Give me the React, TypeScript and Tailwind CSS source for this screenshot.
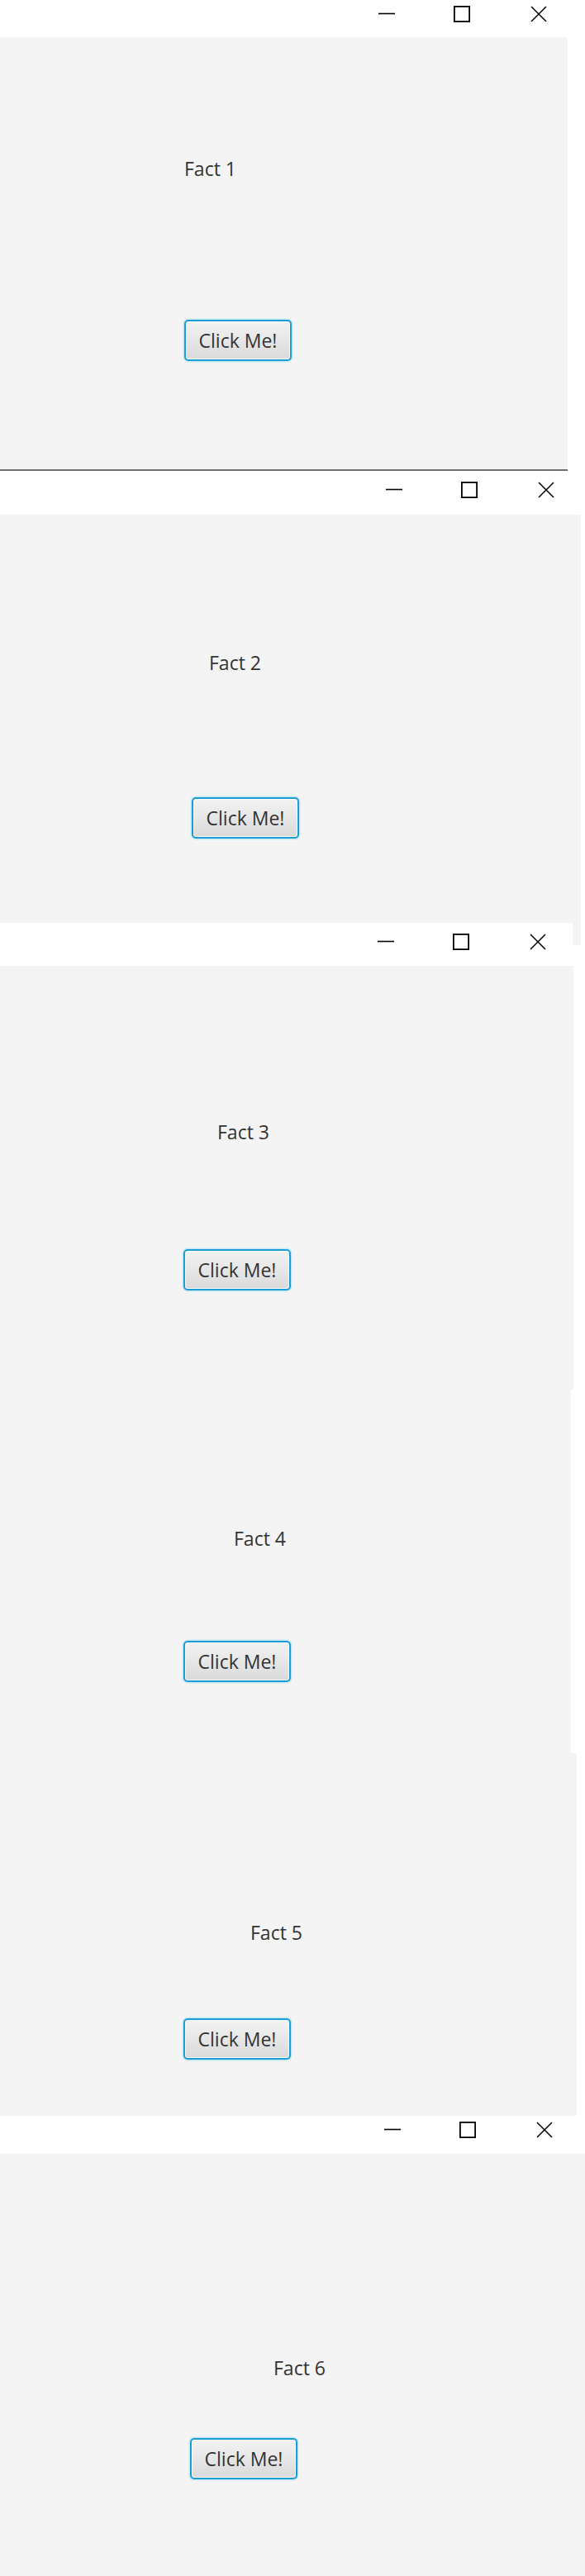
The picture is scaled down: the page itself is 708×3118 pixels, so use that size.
import React from 'react';

type Fact = {
  label: string;
  textClass: string;
  buttonClass: string;
};

// each window below was cut from a screen capture, so every pane has its own offsets
const FONT = "font-['Segoe_UI','Open_Sans',sans-serif]";

function WindowControls({ className }: { className: string }) {
  return (
    <div className={`flex items-start ${className}`}>
      <svg className="h-5 w-5 text-black" viewBox="0 0 20 20" fill="none" stroke="currentColor">
        <path d="M0 9.5h20" strokeWidth={1.6} />
      </svg>
      <svg className="ml-[71px] h-5 w-5 text-black" viewBox="0 0 20 20" fill="none" stroke="currentColor">
        <rect x="0.9" y="0.9" width="18.2" height="18.2" strokeWidth={1.8} />
      </svg>
      <svg className="ml-[73px] h-5 w-5 text-black" viewBox="0 0 20 20" fill="none" stroke="currentColor">
        <path d="M1 1l18 18M19 1L1 19" strokeWidth={1.5} />
      </svg>
    </div>
  );
}

function ClickButton({ className }: { className: string }) {
  return (
    <button
      type="button"
      className={`flex h-[50px] w-[130px] items-center justify-center rounded-[5px] border-2 border-[#1b9ed6] bg-gradient-to-b from-[#f3f3f3] to-[#dadada] text-[23px] leading-none text-[#333333] shadow-[0_0_0_1.5px_#c8e7f5,inset_0_0_0_1px_#f9f9f9] ${className}`}
    >
      Click Me!
    </button>
  );
}

function FactPane({ fact, className }: { fact: Fact; className: string }) {
  return (
    <div className={`flex flex-col bg-[#f4f4f4] ${className}`}>
      <div className={`h-[24px] text-[23px] leading-[24px] text-[#333333] ${fact.textClass}`}>{fact.label}</div>
      <ClickButton className={fact.buttonClass} />
    </div>
  );
}

export default function App() {
  return (
    <div className={`flex w-[708px] flex-col bg-white ${FONT}`}>
      {/* Window 1 */}
      <div className="h-[45px] bg-white">
        <WindowControls className="pl-[458px] pt-[7px]" />
      </div>
      <FactPane
        className="h-[523px] w-[687px] pt-[147px]"
        fact={{ label: 'Fact 1', textClass: 'ml-[223px]', buttonClass: 'ml-[223px] mt-[171px]' }}
      />
      <div className="h-[2px] w-[687px] bg-[#6e6e6e]" />

      {/* Window 2 */}
      <div className="h-[53px] bg-white">
        <WindowControls className="pl-[467px] pt-[13px]" />
      </div>
      <FactPane
        className="h-[494px] w-[703px] pt-[167px]"
        fact={{ label: 'Fact 2', textClass: 'ml-[253px]', buttonClass: 'ml-[232px] mt-[151px]' }}
      />

      {/* Window 3 */}
      <div className="flex h-[52px] items-start">
        <div className="h-[52px] w-[693px] bg-white">
          <WindowControls className="pl-[457px] pt-[13px]" />
        </div>
        <div className="h-[27px] w-[10px] bg-[#f4f4f4]" />
      </div>
      <FactPane
        className="h-[513px] w-[694px] pt-[189px]"
        fact={{ label: 'Fact 3', textClass: 'ml-[263px]', buttonClass: 'ml-[222px] mt-[130px]' }}
      />
      <FactPane
        className="h-[440px] w-[691px] pt-[168px]"
        fact={{ label: 'Fact 4', textClass: 'ml-[283px]', buttonClass: 'ml-[222px] mt-[112px]' }}
      />
      <FactPane
        className="h-[439px] w-[698px] pt-[205px]"
        fact={{ label: 'Fact 5', textClass: 'ml-[303px]', buttonClass: 'ml-[222px] mt-[92px]' }}
      />

      {/* Window 4 */}
      <div className="h-[46px] bg-white">
        <WindowControls className="pl-[465px] pt-[7px]" />
      </div>
      <FactPane
        className="h-[511px] w-[708px] pt-[247px]"
        fact={{ label: 'Fact 6', textClass: 'ml-[331px]', buttonClass: 'ml-[230px] mt-[73px]' }}
      />
    </div>
  );
}
